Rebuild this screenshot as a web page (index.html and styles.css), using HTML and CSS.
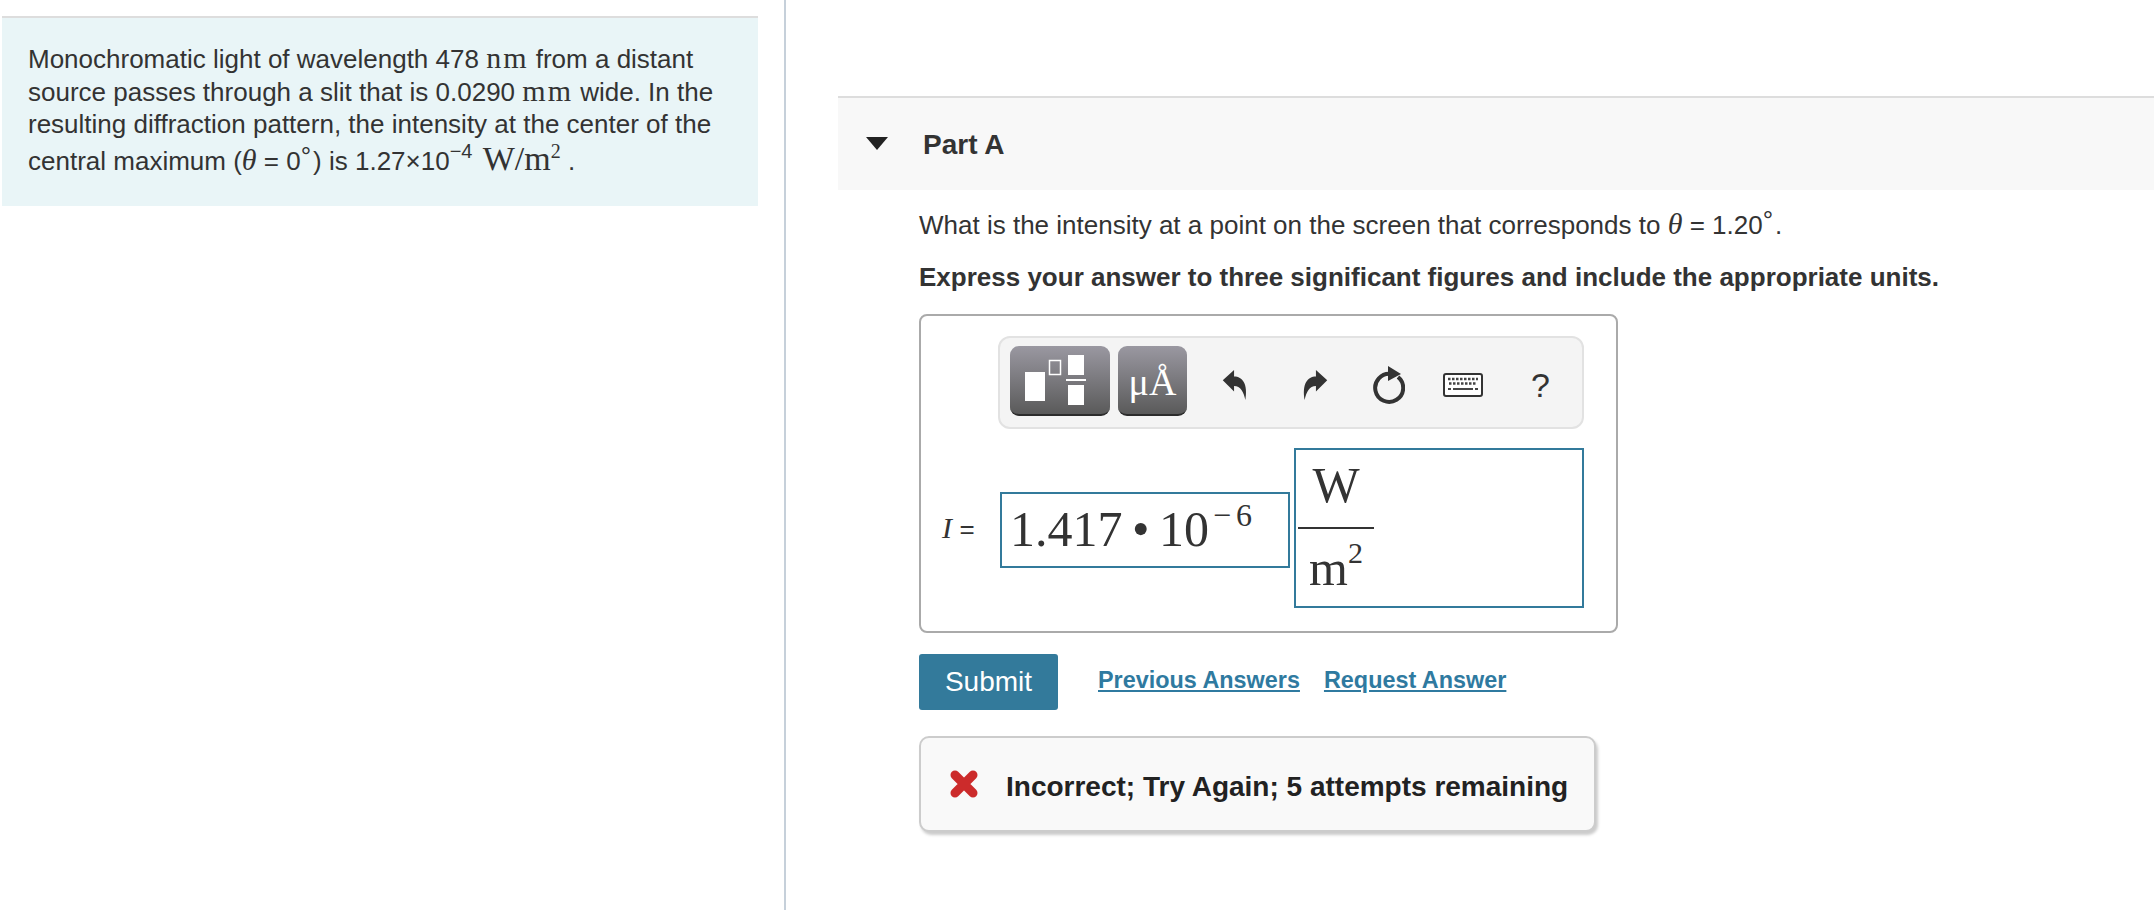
FILE: index.html
```html
<!DOCTYPE html>
<html lang="en">
<head>
    <meta charset="UTF-8">
    <link rel="stylesheet" href="styles.css">
</head>
<body>
    <div class="page">
        <div class="leftCol">
            <div class="intro">
                Monochromatic light of wavelength 478 <span class="unit">nm</span> from a distant source passes through a slit that is 0.0290 <span class="unit">mm</span> wide. In the resulting diffraction pattern, the intensity at the center of the central maximum (<i class="theta">θ</i> = 0<sup class="deg">°</sup>) is 1.27×10<sup class="exp">−4</sup> <span class="unitBig">W/m<sup>2</sup></span> .
            </div>
        </div>
        <div class="rightCol">
            <div class="partHead">
                <span class="arrow"></span>
                <span class="partName">Part A</span>
            </div>
            <div class="partBody">
                <p class="question">What is the intensity at a point on the screen that corresponds to <i class="theta">θ</i> = 1.20<sup class="deg">°</sup>.</p>
                <p class="instr">Express your answer to three significant figures and include the appropriate units.</p>

                <div class="answerBox">
                    <div class="toolbar">
                        <button class="toolBtn wide">
                            <svg width="70" height="50" viewBox="0 0 70 50">
                                <rect x="0" y="17" width="20" height="29" fill="#fff"/>
                                <rect x="24.500" y="5.500" width="11" height="14" fill="none" stroke="#fff" stroke-width="1.500"/>
                                <rect x="43" y="0" width="16" height="20" fill="#fff"/>
                                <rect x="41" y="24" width="20" height="2" fill="#fff"/>
                                <rect x="43" y="30" width="16" height="20" fill="#fff"/>
                            </svg>
                        </button>
                        <button class="toolBtn unitsBtn">μÅ</button>
                        <div class="toolIcons">
                            <svg class="icoUndo" width="28" height="32" viewBox="0 0 26 34"><path d="M0 12 L12 1 L12 8 C21 8 27 16 24 33 C22 24 19 18 12 18 L12 24 Z" fill="#333"/></svg>
                            <svg class="icoRedo" width="28" height="32" viewBox="0 0 26 34"><path d="M26 12 L14 1 L14 8 C5 8 -1 16 2 33 C4 24 7 18 14 18 L14 24 Z" fill="#333"/></svg>
                            <svg class="icoReset" width="34" height="38" viewBox="0 0 34 38"><path d="M20 8 A14 14 0 1 0 27 11" fill="none" stroke="#333" stroke-width="4"/><path d="M17 0 L30 8 L17 15 Z" fill="#333"/></svg>
                            <svg class="icoKeys" width="40" height="24" viewBox="0 0 40 24"><rect x="1" y="1" width="38" height="22" rx="2" fill="#fff" stroke="#333" stroke-width="2"/><path d="M5 6 H35 M6 10.500 H34" stroke="#444" stroke-width="2.500" stroke-dasharray="2.500 1.500"/><path d="M5 16 H8 M10 16 H30 M32 16 H35" stroke="#444" stroke-width="2"/></svg>
                            <span class="helpMark">?</span>
                        </div>
                    </div>
                    <div class="inputRow">
                        <span class="varLabel"><i>I</i> <span class="eq">=</span></span>
                        <div class="mathInput valueInput">1.417 • 10<sup>− 6</sup></div>
                        <div class="mathInput unitInput">
                            <div class="frac">
                                <span class="numer">W</span>
                                <span class="denom">m<sup>2</sup></span>
                            </div>
                        </div>
                    </div>
                </div>

                <div class="actions">
                    <button class="submitBtn">Submit</button>
                    <a class="actionLink" href="#">Previous Answers</a>
                    <a class="actionLink" href="#">Request Answer</a>
                </div>

                <div class="feedback">
                    <svg class="wrongIcon" width="30" height="28" viewBox="0 0 30 28"><path d="M6 5 L24 23 M24 5 L6 23" stroke="#cc2b2b" stroke-width="9" stroke-linecap="round"/></svg>
                    <span>Incorrect; Try Again; 5 attempts remaining</span>
                </div>
            </div>
        </div>
    </div>
</body>
</html>
```

FILE: styles.css
```css
*{box-sizing: border-box}
body{margin: 0;background: #fff;color: #333;font-family: "Liberation Sans",Arial,sans-serif;font-size: 26px}
.page{display: flex;min-height: 910px}

/* left side */
.leftCol{width: 786px;padding: 16px 26px 0 2px;border-right: 2px solid #c6d0da;flex-shrink: 0}
.intro{background: #e9f5f7;border-top: 2px solid #ddd;padding: 24px 26px 0;height: 190px;line-height: 32px}
.unit,.unitBig{font-family: "Liberation Serif",serif;font-size: 30px;letter-spacing: 2px}
.unitBig{font-size: 34px;letter-spacing: 0;margin-left: 3px}
.unitBig sup{font-size: 20px;line-height: 0}
.theta{font-family: "Liberation Serif",serif;font-size: 30px}
sup{line-height: 0}
.deg{font-size: 26px;vertical-align: 5px;margin-right: 2px}
.exp{font-size: 20px;vertical-align: 12px;line-height: 22px}

/* right side */
.rightCol{flex: 1;padding: 96px 0 0 52px}
.partHead{display: flex;align-items: center;height: 94px;background: #f8f8f8;border-top: 2px solid #ddd;padding-left: 28px}
.arrow{width: 0;height: 0;border-left: 11px solid transparent;border-right: 11px solid transparent;border-top: 13px solid #222;margin: -2px 35px 0 0}
.partName{font-weight: bold;font-size: 28px;padding-top: 2px}
.partBody{padding-left: 81px}
.question{margin: 0;padding-top: 16px;line-height: 36px}
.instr{margin: 16px 0 0;line-height: 36px;font-weight: bold}

.answerBox{width: 699px;height: 319px;margin-top: 19px;border: 2px solid #aaa;border-radius: 8px;padding: 20px 32px 0 77px}
.toolbar{display: flex;align-items: flex-start;width: 586px;height: 93px;padding: 8px 0 0 10px;background: #f4f4f4;border: 2px solid #e2e2e2;border-radius: 12px}
.toolBtn{height: 70px;border: none;border-bottom: 2px solid #2c2c2c;border-radius: 9px;background: linear-gradient(#9a98a1,#5a5a5a);color: #fff;padding: 0;display: flex;align-items: center;justify-content: center}
.wide{width: 100px;margin-right: 8px}
.unitsBtn{width: 69px;font-family: "Liberation Serif",serif;font-size: 38px;padding-top: 4px}
.toolIcons{display: flex;align-items: center;flex: 1;height: 70px;padding: 8px 0 0 34px}
.icoRedo{margin-left: 52px}
.icoReset{margin-left: 42px}
.icoKeys{margin-left: 38px}
.helpMark{font-size: 34px;color: #333;margin-left: 48px}

.inputRow{display: flex;align-items: center;margin-top: 19px;margin-left: -56px;font-family: "Liberation Serif",serif}
.varLabel{font-size: 30px;width: 58px;flex-shrink: 0;white-space: nowrap}
.eq{font-family: "Liberation Sans",sans-serif;font-size: 26px}
.mathInput{border: 2px solid #337a9b;width: 290px;flex-shrink: 0}
.valueInput{height: 76px;margin-top: 4px;font-size: 50px;line-height: 70px;padding-left: 8px;white-space: nowrap;word-spacing: -3px}
.valueInput sup{font-size: 32px;vertical-align: 20px;margin-left: 4px}
.unitInput{height: 160px;margin-left: 4px;padding: 7px 0 0 2px}
.frac{display: flex;flex-direction: column;align-items: center;width: 76px;font-size: 50px}
.numer{height: 72px;line-height: 56px;border-bottom: 2px solid #333;width: 100%;text-align: center}
.denom{line-height: 78px}
.denom sup{font-size: 30px;vertical-align: 22px}

.actions{display: flex;align-items: center;margin-top: 21px}
.submitBtn{width: 139px;height: 56px;background: #337a9b;color: #fff;border: none;border-radius: 3px;font-family: inherit;font-size: 28px;margin-right: 40px}
.actionLink{color: #2f7aa0;font-weight: bold;font-size: 23.400px;margin-right: 24px;position: relative;top: -2px}

.feedback{display: flex;align-items: center;width: 677px;height: 96px;margin-top: 26px;padding-left: 28px;background: #f9f9f9;border: 2px solid #ccc;border-radius: 10px;box-shadow: 2px 3px 3px #ccc;font-weight: bold;font-size: 28px;color: #222}
.feedback span{padding-top: 5px}
.wrongIcon{margin-right: 27px}
```
